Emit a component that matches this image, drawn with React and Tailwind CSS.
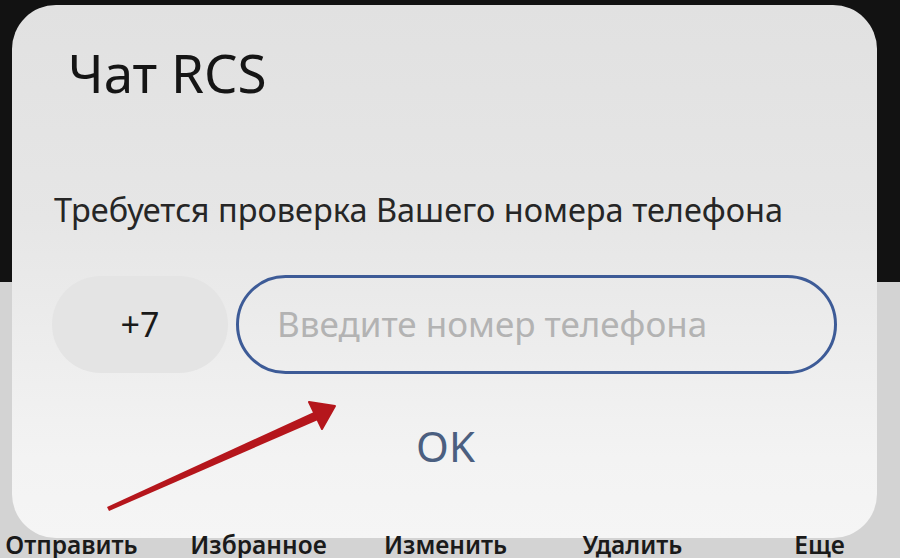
import React from "react";

const TOOLBAR = ["Отправить", "Избранное", "Изменить", "Удалить", "Еще"];

function Arrow() {
  // red pointer drawn over the dialog
  return (
    <svg className="pointer-events-none absolute left-0 top-0" width="900" height="558" viewBox="0 0 900 558">
      <path d="M107 507 L109 511 L318 420 L314 412 Z" fill="#b5161c" />
      <path d="M335 406 L309 402 L322 429 Z" fill="#b5161c" strokeLinejoin="round" stroke="#b5161c" strokeWidth="2" />
    </svg>
  );
}

export default function App() {
  return (
    <div
      className="relative h-[558px] w-[900px] overflow-hidden bg-[linear-gradient(to_bottom,#121212_0px,#121212_282px,#d3d3d3_282px)]"
      style={{ fontFamily: '"Noto Sans", Roboto, sans-serif' }}
    >
      <div className="flex h-[558px] flex-col">
        {/* dialog */}
        <div className="ml-[12px] mt-[5px] flex h-[533px] w-[865px] shrink-0 flex-col rounded-[44px] bg-[linear-gradient(to_bottom,#e1e1e1,#e6e6e6_40%,#f3f3f3_85%,#f5f5f5)]">
          <div className="ml-[56px] mt-[36px] text-[53px] leading-[64px] text-[#151515]">Чат RCS</div>
          <div className="ml-[42px] mt-[85px] text-[32.5px] leading-[40px] text-[#262626]">
            Требуется проверка Вашего номера телефона
          </div>
          <div className="ml-[40px] mt-[45px] flex items-center gap-[8px]">
            <div className="flex h-[97px] w-[176px] items-center justify-center rounded-full bg-[#e4e4e4] text-[34px] text-[#1a1a1a]">
              +7
            </div>
            <div className="flex h-[99px] w-[601px] items-center rounded-full border-[3px] border-[#3d5b97] pl-[38px] text-[35px] text-[#b3b3b3]">
              Введите номер телефона
            </div>
          </div>
          <div className="mt-[46px] pl-[2px] text-center text-[42px] leading-[52px] text-[#4b5f80]">OK</div>
        </div>
        {/* bottom toolbar */}
        <div className="-ml-[22px] -mt-[7px] flex h-[27px] text-[24.5px] font-semibold leading-[28px] text-[#1a1a1a]">
          {TOOLBAR.map((t) => (
            <div key={t} className="w-[187px] shrink-0 text-center">
              {t}
            </div>
          ))}
        </div>
      </div>
      <Arrow />
    </div>
  );
}
